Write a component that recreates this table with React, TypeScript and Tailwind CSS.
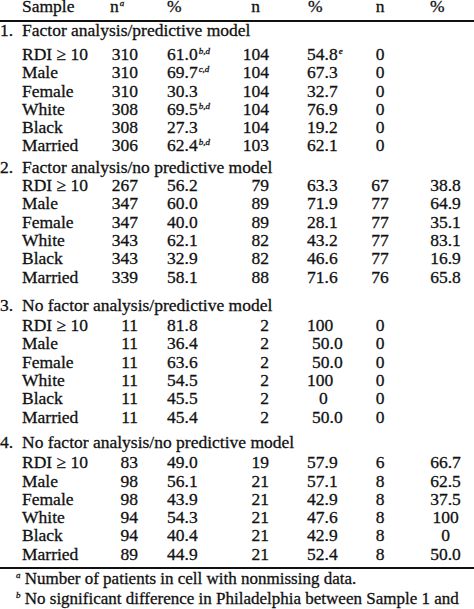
type Row = {
  label: string;
  n1: string;
  p1: string;
  s1?: string;
  n2: string;
  p2: string;
  s2?: string;
  n3: string;
  p3: string;
};

type Section = {
  num: string;
  title: string;
  gap: string;
  rowsGap: string;
  rows: Row[];
};

// tweaks for the decimal alignment of section 3, col 5
const p2Indent: Record<string, string> = {
  '100': 'pl-[38px]',
  '50.0': 'pl-[43px]',
  '0': 'pl-[50px]',
};

const sections: Section[] = [
  {
    num: '1.',
    title: 'Factor analysis/predictive model',
    gap: 'mt-0',
    rowsGap: 'mt-[7px]',
    rows: [
      { label: 'RDI ≥ 10', n1: '310', p1: '61.0', s1: 'b,d', n2: '104', p2: '54.8', s2: 'e', n3: '0', p3: '' },
      { label: 'Male', n1: '310', p1: '69.7', s1: 'c,d', n2: '104', p2: '67.3', n3: '0', p3: '' },
      { label: 'Female', n1: '310', p1: '30.3', n2: '104', p2: '32.7', n3: '0', p3: '' },
      { label: 'White', n1: '308', p1: '69.5', s1: 'b,d', n2: '104', p2: '76.9', n3: '0', p3: '' },
      { label: 'Black', n1: '308', p1: '27.3', n2: '104', p2: '19.2', n3: '0', p3: '' },
      { label: 'Married', n1: '306', p1: '62.4', s1: 'b,d', n2: '103', p2: '62.1', n3: '0', p3: '' },
    ],
  },
  {
    num: '2.',
    title: 'Factor analysis/no predictive model',
    gap: 'mt-[3px]',
    rowsGap: 'mt-0',
    rows: [
      { label: 'RDI ≥ 10', n1: '267', p1: '56.2', n2: '79', p2: '63.3', n3: '67', p3: '38.8' },
      { label: 'Male', n1: '347', p1: '60.0', n2: '89', p2: '71.9', n3: '77', p3: '64.9' },
      { label: 'Female', n1: '347', p1: '40.0', n2: '89', p2: '28.1', n3: '77', p3: '35.1' },
      { label: 'White', n1: '343', p1: '62.1', n2: '82', p2: '43.2', n3: '77', p3: '83.1' },
      { label: 'Black', n1: '343', p1: '32.9', n2: '82', p2: '46.6', n3: '77', p3: '16.9' },
      { label: 'Married', n1: '339', p1: '58.1', n2: '88', p2: '71.6', n3: '76', p3: '65.8' },
    ],
  },
  {
    num: '3.',
    title: 'No factor analysis/predictive model',
    gap: 'mt-[10px]',
    rowsGap: 'mt-[2px]',
    rows: [
      { label: 'RDI ≥ 10', n1: '11', p1: '81.8', n2: '2', p2: '100', n3: '0', p3: '' },
      { label: 'Male', n1: '11', p1: '36.4', n2: '2', p2: '50.0', n3: '0', p3: '' },
      { label: 'Female', n1: '11', p1: '63.6', n2: '2', p2: '50.0', n3: '0', p3: '' },
      { label: 'White', n1: '11', p1: '54.5', n2: '2', p2: '100', n3: '0', p3: '' },
      { label: 'Black', n1: '11', p1: '45.5', n2: '2', p2: '0', n3: '0', p3: '' },
      { label: 'Married', n1: '11', p1: '45.4', n2: '2', p2: '50.0', n3: '0', p3: '' },
    ],
  },
  {
    num: '4.',
    title: 'No factor analysis/no predictive model',
    gap: 'mt-[7px]',
    rowsGap: 'mt-[2px]',
    rows: [
      { label: 'RDI ≥ 10', n1: '83', p1: '49.0', n2: '19', p2: '57.9', n3: '6', p3: '66.7' },
      { label: 'Male', n1: '98', p1: '56.1', n2: '21', p2: '57.1', n3: '8', p3: '62.5' },
      { label: 'Female', n1: '98', p1: '43.9', n2: '21', p2: '42.9', n3: '8', p3: '37.5' },
      { label: 'White', n1: '94', p1: '54.3', n2: '21', p2: '47.6', n3: '8', p3: '100' },
      { label: 'Black', n1: '94', p1: '40.4', n2: '21', p2: '42.9', n3: '8', p3: '0' },
      { label: 'Married', n1: '89', p1: '44.9', n2: '21', p2: '52.4', n3: '8', p3: '50.0' },
    ],
  },
];

const grid = 'grid grid-cols-[22px_87px_29px_89px_42px_88px_46px_71px]';

const Sup = ({ children }: { children: string }) => (
  <span className="relative -top-[6px] ml-[1px] text-[9px] italic">{children}</span>
);

const DataRow = ({ row, indentP2 }: { row: Row; indentP2: boolean }) => (
  <div className={`${grid} h-[18.3px] leading-[18.3px]`}>
    <div />
    <div className="whitespace-nowrap">{row.label}</div>
    <div className="text-right">{row.n1}</div>
    <div className="whitespace-nowrap pl-[29px]">
      {row.p1}
      {row.s1 && <Sup>{row.s1}</Sup>}
    </div>
    <div className="text-right">{row.n2}</div>
    <div className={`whitespace-nowrap ${indentP2 ? p2Indent[row.p2] : 'pl-[38px]'}`}>
      {row.p2}
      {row.s2 && <Sup>{row.s2}</Sup>}
    </div>
    <div className="text-center">{row.n3}</div>
    <div className="pl-[14px] text-center">{row.p3}</div>
  </div>
);

export default function App() {
  return (
    <div
      className="h-[609px] w-[474px] overflow-hidden bg-white text-[17.5px] text-[#111] [-webkit-text-stroke:0.3px_#111]"
      style={{ fontFamily: '"Liberation Serif", "Times New Roman", serif' }}
    >
      <div className={`${grid} h-[11px] pt-[1px] leading-[10px]`}>
        <div />
        <div>Sample</div>
        <div className="pl-[1px]">
          n<Sup>a</Sup>
        </div>
        <div className="pl-[29px]">%</div>
        <div className="pr-[9px] text-right">n</div>
        <div className="pl-[39px]">%</div>
        <div className="text-center">n</div>
        <div className="pl-[27px]">%</div>
      </div>
      <div className="mt-[9px] h-[2px] bg-[#111]" />

      {sections.map((sec, i) => (
        <div key={sec.num} className={sec.gap}>
          <div className={`flex ${i === 0 ? 'h-[16px] leading-[16px]' : 'h-[18.3px] leading-[18.3px]'}`}>
            <span className="w-[22px]">{sec.num}</span>
            <span className="whitespace-nowrap">{sec.title}</span>
          </div>
          <div className={sec.rowsGap}>
            {sec.rows.map((row) => (
              <DataRow key={row.label} row={row} indentP2={sec.num === '3.'} />
            ))}
          </div>
        </div>
      ))}

      <div className="mt-[4px] h-[2px] bg-[#111]" />
      <div className="mt-[1px] pl-[15px] text-[17px] leading-[18.3px] whitespace-nowrap">
        <div>
          <Sup>a</Sup> Number of patients in cell with nonmissing data.
        </div>
        <div>
          <Sup>b</Sup> No significant difference in Philadelphia between Sample 1 and
        </div>
      </div>
    </div>
  );
}
